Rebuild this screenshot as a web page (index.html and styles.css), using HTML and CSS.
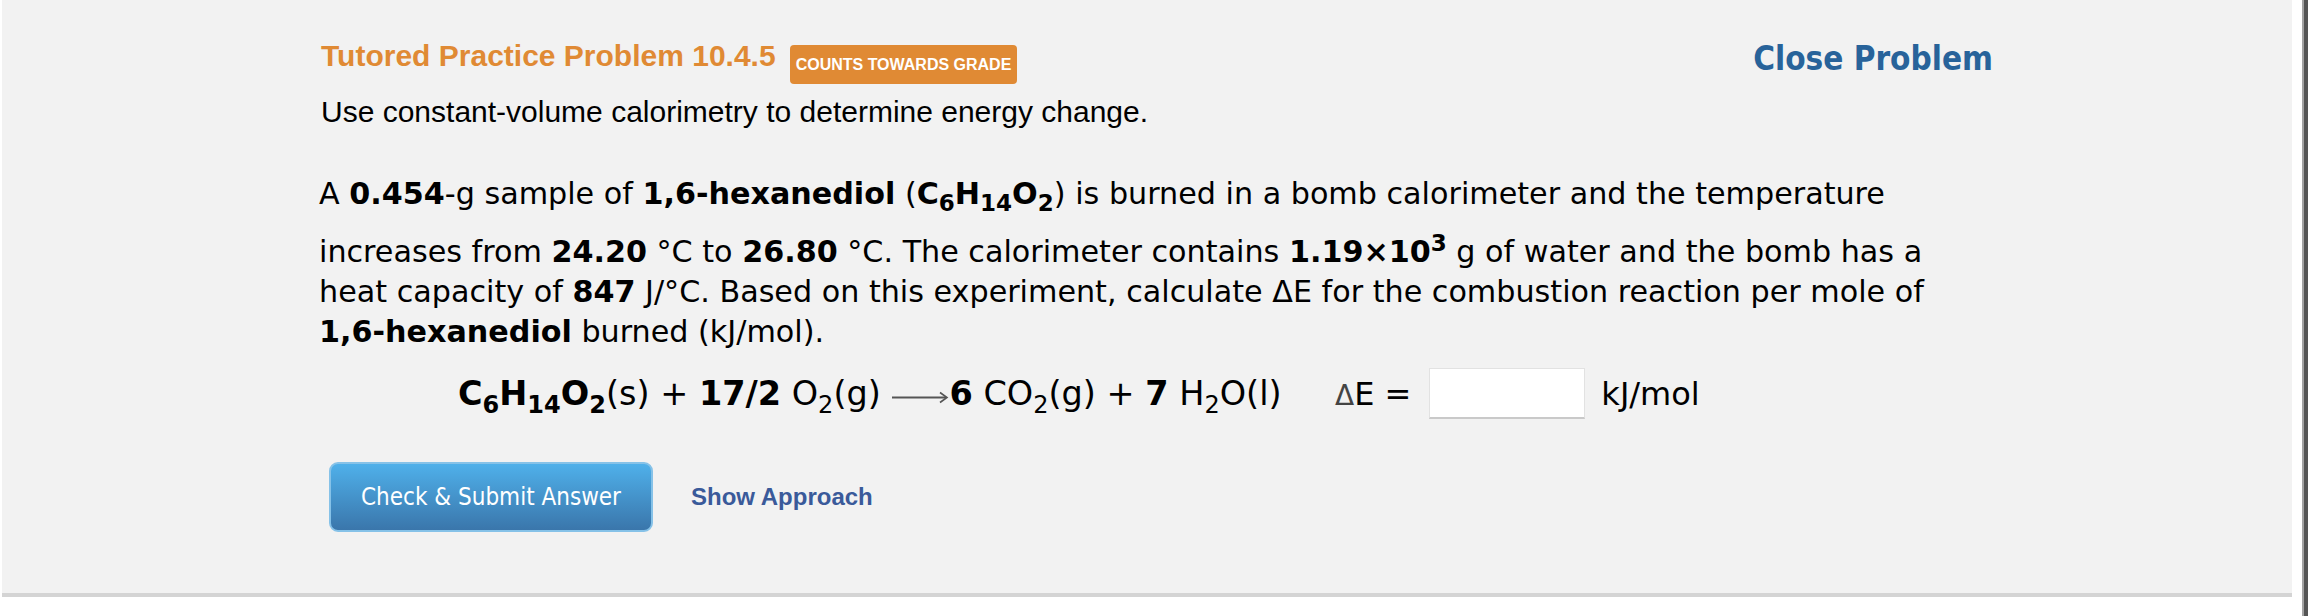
FILE: index.html
```html
<!DOCTYPE html>
<html lang="en">
<head>
<meta charset="utf-8">
<title>Tutored Practice Problem 10.4.5</title>
<link rel="stylesheet" href="styles.css">
</head>
<body>
<div class="screen">
  <div class="panel">
    <div class="content">
      <div class="header">
        <div class="title-group">
          <span class="title">Tutored Practice Problem 10.4.5</span>
          <span class="badge">COUNTS TOWARDS GRADE</span>
        </div>
        <a class="close-link">Close Problem</a>
      </div>
      <p class="intro">Use constant-volume calorimetry to determine energy change.</p>
      <p class="question">A <b>0.454</b>-g sample of <b>1,6-hexanediol</b> (<b>C<sub>6</sub>H<sub>14</sub>O<sub>2</sub></b>) is burned in a bomb calorimeter and the temperature increases from <b>24.20</b> °C to <b>26.80</b> °C. The calorimeter contains <b>1.19×10<sup>3</sup></b> g of water and the bomb has a heat capacity of <b>847</b> J/°C. Based on this experiment, calculate ΔE for the combustion reaction per mole of <b>1,6-hexanediol</b> burned (kJ/mol).</p>
      <div class="equation-row">
        <div class="equation"><b>C<sub>6</sub>H<sub>14</sub>O<sub>2</sub></b>(s) + <b>17/2</b> O<sub>2</sub>(g) <svg class="arrow" width="58" height="20" viewBox="0 0 58 20" aria-hidden="true"><path d="M1 10.5H55" stroke="#555" stroke-width="2"/><path d="M49 5.5L56 10.5L49 15.5" fill="none" stroke="#555" stroke-width="1.6"/></svg><b>6</b> CO<sub>2</sub>(g) + <b>7</b> H<sub>2</sub>O(l)</div>
        <div class="answer">
          <span class="answer-label"><span class="delta">Δ</span>E =</span>
          <input class="answer-input" type="text">
          <span class="unit">kJ/mol</span>
        </div>
      </div>
      <div class="actions">
        <button class="submit">Check &amp; Submit Answer</button>
        <a class="approach">Show Approach</a>
      </div>
    </div>
  </div>
  <div class="gutter"></div>
  <div class="edge"></div>
</div>
</body>
</html>
```

FILE: styles.css
```css
html, body {
  margin: 0;
  padding: 0;
  background: #ffffff;
}

.screen {
  display: flex;
  height: 616px;
}

.panel {
  width: 2290px;
  height: 593px;
  margin-left: 2px;
  background: #f2f2f2;
  border-bottom: 4px solid #d4d4d4;
}

.gutter {
  width: 10px;
}

.edge {
  width: 4px;
  border-left: 2px solid #a3a3a3;
  background: #555555;
}

.content {
  padding: 38px 0 0 315px;
  width: 1676px;
}

.header {
  display: flex;
  justify-content: space-between;
  align-items: flex-start;
  height: 46px;
}

.title-group {
  display: flex;
  align-items: flex-start;
  gap: 14px;
}

.title {
  font-family: "Liberation Sans", Arial, sans-serif;
  font-weight: bold;
  font-size: 30px;
  line-height: 36px;
  color: #e08a34;
  margin-left: 4px;
}

.badge {
  display: flex;
  align-items: center;
  height: 39px;
  margin-top: 7px;
  padding: 0 6px;
  box-sizing: border-box;
  border-radius: 4px;
  background: #e08a34;
  color: #ffffff;
  font-family: "Liberation Sans", Arial, sans-serif;
  font-weight: bold;
  font-size: 16px;
}

.close-link {
  margin-top: 3px;
  font-family: "DejaVu Sans Condensed", "DejaVu Sans", sans-serif;
  font-stretch: semi-condensed;
  font-weight: bold;
  font-size: 33px;
  line-height: 36px;
  color: #28639a;
}

.intro {
  margin: 11px 0 0 4px;
  font-family: "Liberation Sans", Arial, sans-serif;
  font-size: 30px;
  line-height: 34px;
  color: #000000;
}

.question {
  margin: 45px 0 0 2px;
  width: 1630px;
  font-family: "DejaVu Sans", Verdana, sans-serif;
  font-size: 30.2px;
  line-height: 40px;
  color: #000000;
}

.question sub,
.question sup {
  font-size: 23px;
}

.equation-row {
  display: flex;
  align-items: center;
  margin-top: 16px;
  height: 51px;
}

.equation {
  width: 877px;
  margin-left: 141px;
  font-family: "DejaVu Sans", Verdana, sans-serif;
  font-size: 33.5px;
  line-height: 51px;
  color: #000000;
  white-space: nowrap;
}

.equation sub {
  font-size: 24px;
  line-height: 0;
}

.arrow {
  vertical-align: -2px;
}

.answer {
  display: flex;
  align-items: center;
  font-family: "DejaVu Sans", Verdana, sans-serif;
  font-size: 32px;
  color: #000000;
}

.delta {
  color: #444444;
  font-size: 28px;
}

.answer-input {
  width: 156px;
  height: 51px;
  box-sizing: border-box;
  margin: 0 16px 0 18px;
  border: 1px solid #e2e2e2;
  border-bottom: 2px solid #c9c9c9;
  background: #ffffff;
  padding: 0;
}

.actions {
  display: flex;
  align-items: center;
  gap: 38px;
  margin-top: 43px;
  margin-left: 12px;
}

.submit {
  width: 324px;
  height: 70px;
  border: 2px solid #86c2e8;
  border-radius: 9px;
  background: linear-gradient(#4fb0ea, #3a76ab);
  color: #ffffff;
  font-family: "DejaVu Sans Condensed", "DejaVu Sans", sans-serif;
  font-stretch: semi-condensed;
  font-size: 24px;
  padding: 0;
}

.approach {
  font-family: "Liberation Sans", Arial, sans-serif;
  font-weight: bold;
  font-size: 24px;
  color: #3a5a9a;
}
```
